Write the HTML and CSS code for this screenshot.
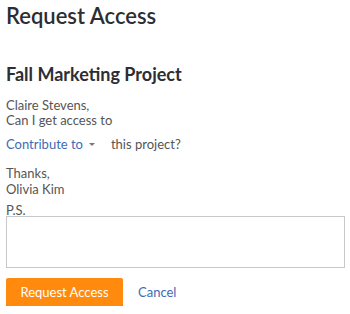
FILE: index.html
```html
<!DOCTYPE html>
<html>
<head>
<meta charset="utf-8">
<link rel="stylesheet" href="styles.css">
</head>
<body>
<div class="page">
  <h1 class="title">Request Access</h1>
  <h2 class="project">Fall Marketing Project</h2>
  <p class="msg">Claire Stevens,<br>Can I get access to</p>
  <div class="perm-row">
    <span class="perm">Contribute to <span class="caret"></span></span>
    <span class="rest">this project?</span>
  </div>
  <p class="msg sign">Thanks,<br>Olivia Kim</p>
  <label class="ps-label">P.S.</label>
  <textarea class="ps"></textarea>
  <div class="actions">
    <button class="btn">Request Access</button>
    <a class="cancel">Cancel</a>
  </div>
</div>
</body>
</html>
```
FILE: styles.css
```css
* { box-sizing: border-box; }
body {
  margin: 0;
  background: #fff;
  font-family: "Lato", "Open Sans", sans-serif;
  color: #555;
}
.page {
  padding: 4px 5px 0 6px;
  display: flex;
  flex-direction: column;
}
.title {
  margin: 0;
  font-size: 22px;
  font-weight: 600;
  color: #2c2e33;
  line-height: 24px;
}
.project {
  margin: 36px 0 0;
  font-size: 18px;
  font-weight: 700;
  color: #2c2e33;
  line-height: 20px;
}
.msg {
  margin: 14px 0 0;
  font-size: 13px;
  line-height: 15px;
}
.perm-row {
  margin-top: 9px;
  font-size: 13px;
  line-height: 15px;
  display: flex;
  gap: 16px;
}
.perm {
  color: #3c6bb5;
  display: inline-flex;
  align-items: center;
  gap: 6px;
}
.caret {
  width: 0;
  height: 0;
  border-left: 3px solid transparent;
  border-right: 3px solid transparent;
  border-top: 3px solid #777;
}
.sign { margin-top: 13px; line-height: 16px; }
.ps-label {
  margin-top: 7px;
  font-size: 13px;
  line-height: 12px;
}
.ps {
  margin-top: 0;
  width: 339px;
  height: 52px;
  border: 1px solid #c8c8c8;
  resize: none;
  display: block;
}
.actions {
  margin-top: 10px;
  display: flex;
  align-items: center;
  gap: 15px;
}
.btn {
  width: 117px;
  height: 28px;
  background: #ff8a0d;
  color: #fff;
  border: none;
  border-radius: 2px;
  box-shadow: 0 1px 0 #d66f00;
  font-family: inherit;
  font-size: 13px;
  padding: 0;
}
.cancel {
  color: #3c6bb5;
  font-size: 13px;
}
```
